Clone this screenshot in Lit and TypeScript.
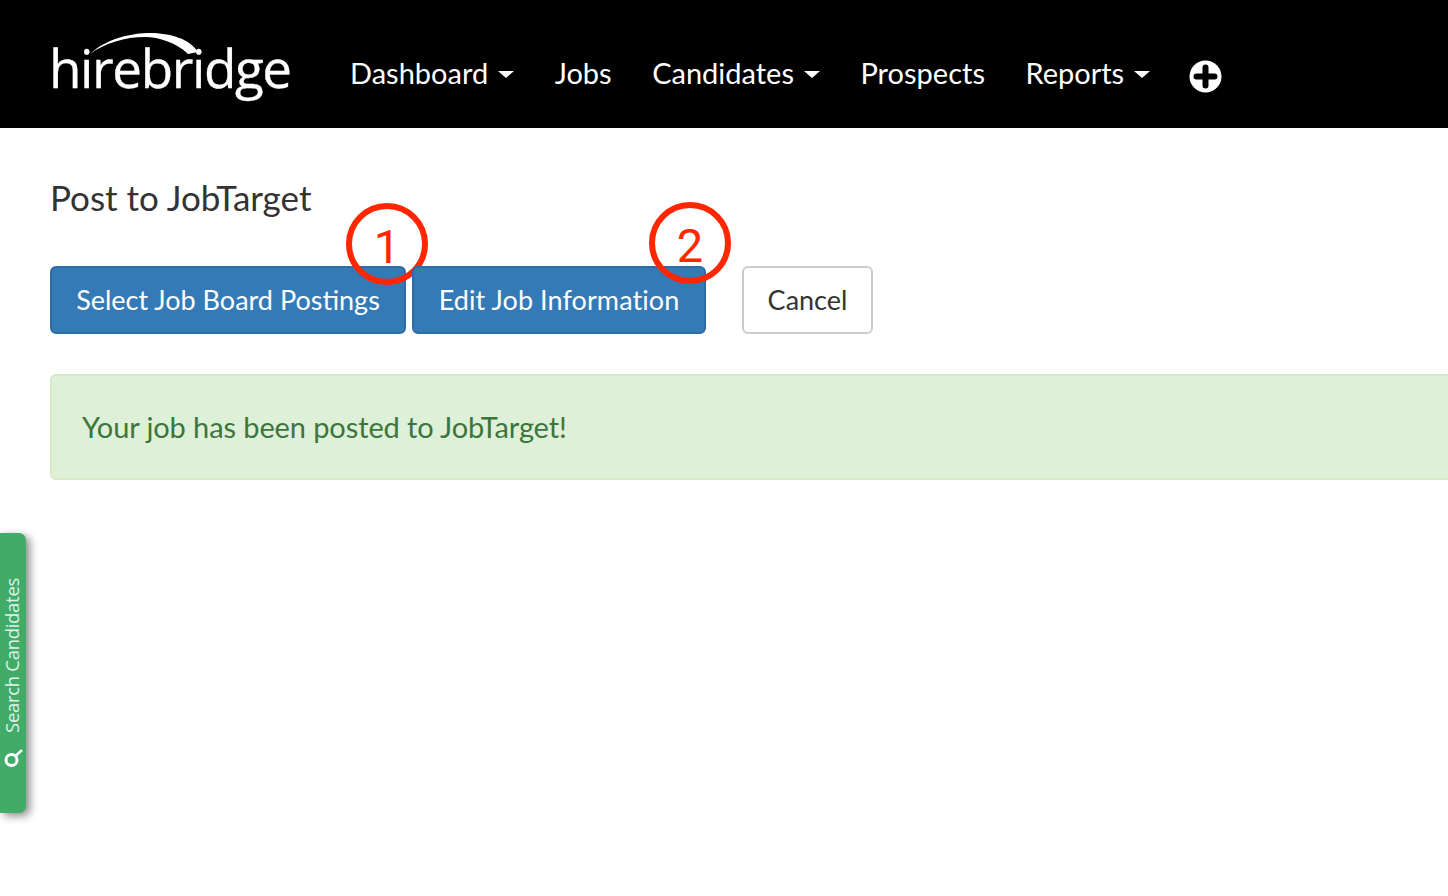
import { LitElement, html, css } from "lit";
import { customElement } from "lit/decorators.js";

const caret = html`<span class="caret"></span>`;

@customElement("app-root")
export class AppRoot extends LitElement {
  static styles = css`
    :host { display: block; position: relative; height: 896px; overflow: hidden; background: #fff;
      font-family: Lato, "Open Sans", sans-serif; color: #333; }
    * { box-sizing: border-box; }
    .nav { height: 128px; background: #000; display: flex; align-items: center; padding-left: 52px; }
    .logo { position: relative; width: 298px; height: 128px; flex: none; }
    .logo-text { position: absolute; left: -3px; top: 28px; font-size: 53px; line-height: 80px; color: #fff; letter-spacing: -1.4px; font-weight: 400; font-family: "Open Sans", sans-serif; -webkit-text-stroke: .3px #fff; }
    .arc { position: absolute; left: 33px; top: 30px; }
    .menu { display: flex; align-items: center; gap: 40.5px; font-size: 29px; color: #fff; padding-top: 20px; height: 128px; }
    .item { display: flex; align-items: center; gap: 10px; white-space: nowrap; margin-top: -4px; }
    .caret { width: 0; height: 0; border-left: 8px solid transparent; border-right: 8px solid transparent; border-top: 7px solid #fff; margin-top: 4px; }
    .plus { display: block; margin: 4px 0 0 -2px; }
    main { padding: 0 0 0 50px; }
    h1 { margin: 0; padding-top: 48px; height: 138px; font-size: 35px; line-height: 42px; font-weight: 400; color: #333; }
    .btns { display: flex; height: 68px; }
    .btn { height: 68px; display: flex; align-items: center; justify-content: center; padding-bottom: 2px; border-radius: 6px; font-size: 27px; white-space: nowrap; border: 2px solid #2e6da4; background: #337ab7; color: #fff; position: relative; }
    .b1 { width: 356px; }
    .b2 { width: 294px; margin-left: 6px; letter-spacing: .08px; }
    .b3 { width: 131px; margin-left: 36px; background: #fff; color: #333; border-color: #ccc; }
    .note { position: absolute; display: block; pointer-events: none; }
    .note text { font-family: Roboto, Arial, sans-serif; font-weight: 400; font-size: 47px; fill: #ff2600; }
    .n1 { left: 293px; top: -66px; }
    .n2 { left: 234px; top: -67px; }
    .alert { margin-top: 40px; height: 106px; width: 1500px; background: #dff0d8; border: 2px solid #d6e9c6; border-radius: 6px; color: #3c763d; font-size: 29px; letter-spacing: -.1px; padding: 0 0 2px 30px; display: flex; align-items: center; }
    .tab { position: absolute; left: 0; top: 533px; width: 26px; height: 280px; background: #42ab68; border-radius: 0 7px 7px 0; box-shadow: 4px 3px 8px rgba(0,0,0,.45); color: #dff3e6; display: flex; flex-direction: column; align-items: center; justify-content: flex-end; padding-bottom: 44px; gap: 16px; }
    .tab span { writing-mode: vertical-rl; transform: rotate(180deg); font-size: 18.5px; font-family: "Open Sans", sans-serif; letter-spacing: -.3px; white-space: nowrap; line-height: 24px; margin-right: 3px; }
  `;

  private note(cls: string, n: string) {
    return html`<svg class="note ${cls}" width="84" height="84" viewBox="0 0 84 84">
      <circle cx="42" cy="42" r="38" fill="none" stroke="#ff2600" stroke-width="6"></circle>
      <text x="42" y="61" text-anchor="middle">${n}</text>
    </svg>`;
  }

  render() {
    return html`
      <div class="nav">
        <div class="logo">
          <span class="logo-text">hirebridge</span>
          <svg class="arc" width="120" height="30" viewBox="0 0 120 30">
            <path d="M5 24 C 22 8, 48 3, 65 3 C 85 3, 105 9, 113 22 L 103 24 C 92 13, 74 7, 60 7 C 40 7, 20 13, 5 24 Z" fill="#fff"></path>
          </svg>
        </div>
        <div class="menu">
          <div class="item">Dashboard ${caret}</div>
          <div class="item">Jobs</div>
          <div class="item">Candidates ${caret}</div>
          <div class="item">Prospects</div>
          <div class="item">Reports ${caret}</div>
          <svg class="plus" width="33" height="33" viewBox="0 0 33 33">
            <circle cx="16.5" cy="16.5" r="16" fill="#fff"></circle>
            <path d="M16.5 7.5 V25.5 M7.5 16.5 H25.5" stroke="#000" stroke-width="6" stroke-linecap="round"></path>
          </svg>
        </div>
      </div>
      <main>
        <h1>Post to JobTarget</h1>
        <div class="btns">
          <div class="btn b1">Select Job Board Postings${this.note("n1", "1")}</div>
          <div class="btn b2">Edit Job Information${this.note("n2", "2")}</div>
          <div class="btn b3">Cancel</div>
        </div>
        <div class="alert">Your job has been posted to JobTarget!</div>
      </main>
      <div class="tab">
        <span>Search Candidates</span>
        <svg width="22" height="20" viewBox="0 0 22 20">
          <circle cx="9.5" cy="11" r="5.5" fill="none" stroke="#fff" stroke-width="3"></circle>
          <path d="M13.5 7 L20 1" stroke="#fff" stroke-width="2.4"></path>
        </svg>
      </div>
    `;
  }
}
